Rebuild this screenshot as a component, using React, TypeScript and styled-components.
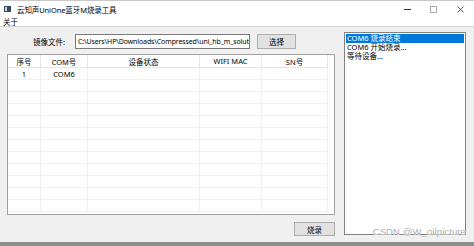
import React from "react";
import styled, { createGlobalStyle } from "styled-components";

const Global = createGlobalStyle`
  html, body { margin: 0; padding: 0; background: #ffffff; }
  body { font-family: "Noto Sans", "Noto Sans CJK SC", sans-serif; }
  * { box-sizing: border-box; }
`;

const Window = styled.div`
  position: relative;
  width: 474px;
  height: 246px;
  display: flex;
  flex-direction: column;
  overflow: hidden;
  font-size: 7.5px;
  color: #000;
  border-top: 1px solid #c8c8c8;
`;

const TitleBar = styled.div`
  height: 17px;
  background: #fff;
  display: flex;
  align-items: center;
  padding-left: 4px;
`;

const TitleText = styled.span`
  margin-left: 6px;
  font-size: 7.5px;
  letter-spacing: -0.1px;
`;

const Controls = styled.div`
  margin-left: auto;
  display: flex;
  align-items: center;
  height: 100%;
`;

const Ctrl = styled.div<{ $w: number }>`
  width: ${(p) => p.$w}px;
  height: 100%;
  display: flex;
  align-items: center;
  justify-content: center;
`;

const MenuBar = styled.div`
  height: 10px;
  background: #fff;
  display: flex;
  align-items: center;
  padding-left: 3px;
  border-bottom: 1px solid #d4d4d4;
  font-size: 7.5px;
  line-height: 10px;
`;

const Body = styled.div`
  flex: 1;
  background: #f0f0f0;
  display: flex;
  padding: 5px 8px 6px 7px;
  gap: 9px;
`;

const LeftCol = styled.div`
  width: 328px;
  display: flex;
  flex-direction: column;
`;

const FileRow = styled.div`
  display: flex;
  align-items: center;
  height: 15px;
  margin-top: 2px;
`;

const Label = styled.span`
  margin-left: 26px;
  width: 42px;
  font-size: 7.5px;
`;

const PathInput = styled.div`
  width: 175px;
  height: 15px;
  background: #fff;
  border: 1px solid #7a7a7a;
  font-size: 7px;
  line-height: 13px;
  padding-left: 2px;
  white-space: nowrap;
  overflow: hidden;
  letter-spacing: -0.12px;
`;

const Gap = styled.span<{ $w: number }>`
  width: ${(p) => p.$w}px;
`;

const Btn = styled.div<{ $w: number; $h: number }>`
  width: ${(p) => p.$w}px;
  height: ${(p) => p.$h}px;
  background: #e1e1e1;
  border: 1px solid #adadad;
  display: flex;
  align-items: center;
  justify-content: center;
  font-size: 7.5px;
`;

const Table = styled.div`
  margin-top: 5px;
  width: 328px;
  height: 161px;
  background: #fff;
  border: 1px solid #a0a0a0;
  overflow: hidden;
`;

const Grid = styled.div`
  display: grid;
  grid-template-columns: 33px 47px 112px 62px 66px;
`;

const HeadCell = styled.div`
  height: 13px;
  border-right: 1px solid #e5e5e5;
  border-bottom: 1px solid #e5e5e5;
  display: flex;
  align-items: center;
  justify-content: center;
  font-size: 7.5px;
  color: #000;
`;

const Cell = styled.div`
  height: 12px;
  border-right: 1px solid #f0f0f0;
  border-bottom: 1px solid #f0f0f0;
  display: flex;
  align-items: center;
  justify-content: center;
  font-size: 7.5px;
`;

const BottomRow = styled.div`
  margin-top: 7px;
  display: flex;
  justify-content: flex-end;
`;

const ListBox = styled.div`
  width: 122px;
  height: 203px;
  background: #fff;
  border: 1px solid #828282;
  padding: 1px;
  display: flex;
  flex-direction: column;
`;

const ListItem = styled.div<{ $sel?: boolean }>`
  height: 9px;
  line-height: 9px;
  font-size: 7.5px;
  padding-left: 1px;
  background: ${(p) => (p.$sel ? "#0078d7" : "transparent")};
  color: ${(p) => (p.$sel ? "#fff" : "#000")};
  white-space: nowrap;
`;

const BottomEdge = styled.div`
  height: 4px;
  background: #8f8f8f;
`;

const Watermark = styled.div`
  position: absolute;
  right: 8px;
  bottom: 9px;
  font-family: "Liberation Sans", Arial, sans-serif;
  font-size: 9.5px;
  color: #adadad;
  text-shadow: 0 0 1px #fff, 0 0 1px #fff;
  letter-spacing: 0.1px;
`;

const headers = ["序号", "COM号", "设备状态", "WIFI MAC", "SN号"];
const ROWS = 12;

export default function App() {
  const rows: string[][] = [["1", "COM6", "", "", ""]];
  while (rows.length < ROWS) rows.push(["", "", "", "", ""]);
  return (
    <>
      <Global />
      <Window>
        <TitleBar>
          <svg width="7" height="6" viewBox="0 0 7 6">
            <rect x="0" y="0" width="7" height="6" fill="#3a4a5a" />
            <rect x="1" y="1" width="2" height="4" fill="#c9d3dc" />
          </svg>
          <TitleText>云知声UniOne蓝牙M烧录工具</TitleText>
          <Controls>
            <Ctrl $w={26}>
              <svg width="7" height="1" viewBox="0 0 7 1">
                <rect width="7" height="1" fill="#333" />
              </svg>
            </Ctrl>
            <Ctrl $w={26}>
              <svg width="7" height="7" viewBox="0 0 7 7">
                <rect x="0.5" y="0.5" width="6" height="6" fill="none" stroke="#aaa" />
              </svg>
            </Ctrl>
            <Ctrl $w={28}>
              <svg width="7" height="7" viewBox="0 0 7 7">
                <path d="M0.5 0.5 L6.5 6.5 M6.5 0.5 L0.5 6.5" stroke="#333" strokeWidth="0.8" />
              </svg>
            </Ctrl>
          </Controls>
        </TitleBar>
        <MenuBar>关于</MenuBar>
        <Body>
          <LeftCol>
            <FileRow>
              <Label>镜像文件:</Label>
              <PathInput>C:\Users\HP\Downloads\Compressed\uni_hb_m_soluti</PathInput>
              <Gap $w={7} />
              <Btn $w={39} $h={15}>选择</Btn>
            </FileRow>
            <Table>
              <Grid>
                {headers.map((h) => (
                  <HeadCell key={h}>{h}</HeadCell>
                ))}
                {rows.map((r, i) =>
                  r.map((c, j) => <Cell key={`${i}-${j}`}>{c}</Cell>)
                )}
              </Grid>
            </Table>
            <BottomRow>
              <Btn $w={41} $h={14}>烧录</Btn>
            </BottomRow>
          </LeftCol>
          <ListBox>
            <ListItem $sel>COM6 烧录结束</ListItem>
            <ListItem>COM6 开始烧录...</ListItem>
            <ListItem>等待设备...</ListItem>
          </ListBox>
        </Body>
        <BottomEdge />
        <Watermark>CSDN @W_oilpicture</Watermark>
      </Window>
    </>
  );
}
